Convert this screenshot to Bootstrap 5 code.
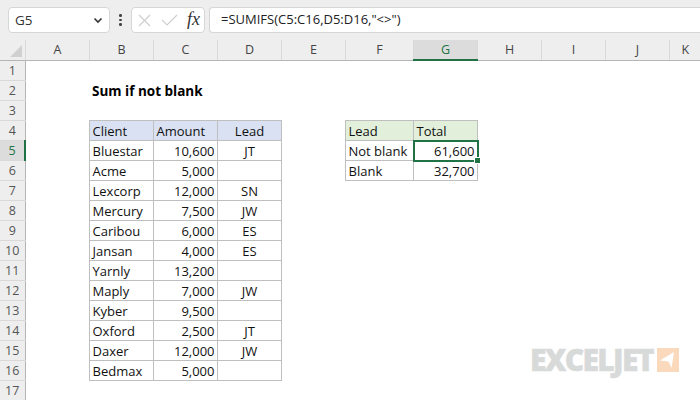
<!DOCTYPE html>
<html lang="en">
<head>
<meta charset="utf-8">
<title>Sum if not blank</title>
<link rel="stylesheet" href="https://cdn.jsdelivr.net/npm/bootstrap@5.3.0/dist/css/bootstrap.min.css">
<style>
html,body{width:700px;height:400px;overflow:hidden;background:#fff;margin:0}
body{font-family:"Open Sans","Noto Sans",sans-serif;font-size:13px;color:#111;position:relative}
.fxbar{height:40px;background:#eeeeee;padding:7px 0 7px 8px;gap:0}
.fxbox{background:#fff;border:1px solid #d6d6d6;height:26px;border-radius:4px}
.namebox{width:102px;padding:0 6px 0 6px;font-size:13.5px;color:#333}
.grip{width:21px;gap:2px}
.grip i{display:block;width:2.5px;height:2.5px;background:#444;border-radius:50%}
.fnbtns{width:74px;padding:0 4px 0 6px}
.fxmark{font-family:"Liberation Serif",serif;font-size:18px;font-style:italic;color:#333;line-height:1;margin-top:-2px}
.formula{flex:1;margin-left:4px;padding:0 0 0 11px;border-right:0;border-radius:4px 0 0 4px;font-size:13px;color:#222;white-space:nowrap}
.sheet{border-collapse:collapse;table-layout:fixed;width:700px;background:#fff}
.sheet th,.sheet td{height:20px;padding:1px 2px 0 3px;line-height:18px;font-weight:400;white-space:nowrap;overflow:hidden}
.sheet thead th{background:#eeeeee;color:#444;text-align:center;font-size:12.5px;border-bottom:1px solid #b5b5b5;position:relative}
.sheet thead th+th{border-left:1px solid #d9d9d9}
.sheet tbody th{background:#eeeeee;color:#555;text-align:center;font-size:12.5px;border-right:1px solid #b5b5b5;border-bottom:1px solid #d9d9d9;padding:1px 0 0}
.sheet .corner{position:relative}
.tri{position:absolute;right:3px;bottom:3px;width:0;height:0;border-style:solid;border-width:0 0 12px 12px;border-color:transparent transparent #d0d0d0 transparent}
.sheet thead th.colsel{background:#dcdcdc;color:#217346;border-bottom:2px solid #217346}
.sheet tbody th.rowsel{background:#dcdcdc;color:#217346;border-right:2px solid #217346}
.sheet td.bx{border:1px solid #bfbfbf}
.sheet td.hd-blue{background:#d9e1f2}
.sheet td.hd-green{background:#e2efda}
.sheet td.sheet-title{font-weight:700;font-size:13.5px;color:#000}
.sheet td.cursor{position:relative;overflow:visible}
.cursor-box{position:absolute;left:-1px;top:-1px;right:-2px;bottom:-2px;border:2px solid #217346}
.cursor-handle{position:absolute;right:-3px;bottom:-3px;width:5px;height:5px;background:#217346;border:0;outline:1px solid #fff}
.brand{position:absolute;left:530px;top:344px;gap:4px;height:32px}
.brand-word{font-family:"Open Sans",sans-serif;font-weight:800;font-size:30px;letter-spacing:-1.7px;color:#d8dada;line-height:32px;-webkit-text-stroke:.5px #d8dada}
</style>
</head>
<body>
<div class="fxbar d-flex align-items-stretch">
  <div class="fxbox namebox d-flex align-items-center justify-content-between">
    <span>G5</span>
    <svg width="10" height="7" viewBox="0 0 10 7"><path d="M1.5 1.5 5 5l3.5-3.5" fill="none" stroke="#333" stroke-width="1.6"/></svg>
  </div>
  <div class="grip d-flex flex-column align-items-center justify-content-center"><i></i><i></i><i></i></div>
  <div class="fxbox fnbtns d-flex align-items-center justify-content-between">
    <svg width="13" height="13" viewBox="0 0 13 13"><path d="M1 1l11 11M12 1 1 12" fill="none" stroke="#cfcfcf" stroke-width="1.2"/></svg>
    <svg width="17" height="12" viewBox="0 0 17 12"><path d="M1 6l5 5L16 1" fill="none" stroke="#cfcfcf" stroke-width="1.2"/></svg>
    <span class="fxmark">fx</span>
  </div>
  <div class="fxbox formula d-flex align-items-center">=SUMIFS(C5:C16,D5:D16,"&lt;&gt;")</div>
</div>
<table class="sheet">
  <colgroup><col style="width:25px"><col style="width:64px"><col style="width:64px"><col style="width:64px"><col style="width:64px"><col style="width:64px"><col style="width:68px"><col style="width:64px"><col style="width:64px"><col style="width:64px"><col style="width:64px"><col style="width:31px"></colgroup>
  <thead><tr><th class="corner"><span class="tri"></span></th><th>A</th><th>B</th><th>C</th><th>D</th><th>E</th><th>F</th><th class="colsel">G</th><th>H</th><th>I</th><th>J</th><th>K</th></tr></thead>
  <tbody>
    <tr><th>1</th><td colspan="11"></td></tr>
    <tr><th>2</th><td></td><td colspan="3" class="sheet-title">Sum if not blank</td><td colspan="7"></td></tr>
    <tr><th>3</th><td colspan="11"></td></tr>
    <tr><th>4</th><td></td><td class="bx hd-blue">Client</td><td class="bx hd-blue">Amount</td><td class="bx hd-blue text-center">Lead</td><td></td><td class="bx hd-green">Lead</td><td class="bx hd-green">Total</td><td colspan="4"></td></tr>
    <tr><th class="rowsel">5</th><td></td><td class="bx">Bluestar</td><td class="bx text-end">10,600</td><td class="bx text-center">JT</td><td></td><td class="bx">Not blank</td><td class="bx text-end cursor">61,600<span class="cursor-box"></span><span class="cursor-handle"></span></td><td colspan="4"></td></tr>
    <tr><th>6</th><td></td><td class="bx">Acme</td><td class="bx text-end">5,000</td><td class="bx text-center"></td><td></td><td class="bx">Blank</td><td class="bx text-end">32,700</td><td colspan="4"></td></tr>
    <tr><th>7</th><td></td><td class="bx">Lexcorp</td><td class="bx text-end">12,000</td><td class="bx text-center">SN</td><td colspan="7"></td></tr>
    <tr><th>8</th><td></td><td class="bx">Mercury</td><td class="bx text-end">7,500</td><td class="bx text-center">JW</td><td colspan="7"></td></tr>
    <tr><th>9</th><td></td><td class="bx">Caribou</td><td class="bx text-end">6,000</td><td class="bx text-center">ES</td><td colspan="7"></td></tr>
    <tr><th>10</th><td></td><td class="bx">Jansan</td><td class="bx text-end">4,000</td><td class="bx text-center">ES</td><td colspan="7"></td></tr>
    <tr><th>11</th><td></td><td class="bx">Yarnly</td><td class="bx text-end">13,200</td><td class="bx text-center"></td><td colspan="7"></td></tr>
    <tr><th>12</th><td></td><td class="bx">Maply</td><td class="bx text-end">7,000</td><td class="bx text-center">JW</td><td colspan="7"></td></tr>
    <tr><th>13</th><td></td><td class="bx">Kyber</td><td class="bx text-end">9,500</td><td class="bx text-center"></td><td colspan="7"></td></tr>
    <tr><th>14</th><td></td><td class="bx">Oxford</td><td class="bx text-end">2,500</td><td class="bx text-center">JT</td><td colspan="7"></td></tr>
    <tr><th>15</th><td></td><td class="bx">Daxer</td><td class="bx text-end">12,000</td><td class="bx text-center">JW</td><td colspan="7"></td></tr>
    <tr><th>16</th><td></td><td class="bx">Bedmax</td><td class="bx text-end">5,000</td><td class="bx text-center"></td><td colspan="7"></td></tr>
    <tr><th>17</th><td colspan="11"></td></tr>
  </tbody>
</table>
<div class="brand d-flex align-items-center">
  <span class="brand-word">EXCELJET</span>
  <svg width="22" height="24" viewBox="0 0 22 24"><rect width="22" height="24" fill="#fbd9bd"/><path d="M3 12.5 17 4l-2.5 16-3-6.5z" fill="#fff"/></svg>
</div>
<script src="https://cdn.jsdelivr.net/npm/bootstrap@5.3.0/dist/js/bootstrap.bundle.min.js"></script>
</body>
</html>
